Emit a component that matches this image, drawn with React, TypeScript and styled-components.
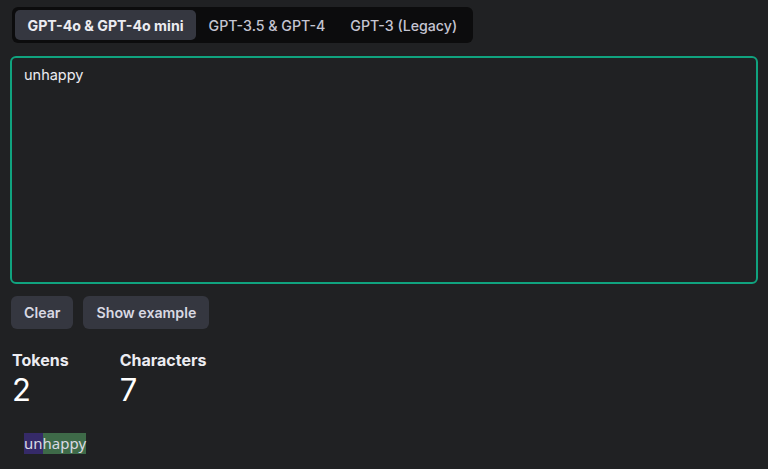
import styled, { createGlobalStyle } from "styled-components";
import { useState } from "react";

const GlobalStyle = createGlobalStyle`
  html, body {
    margin: 0;
    padding: 0;
    background: #202123;
  }
  body {
    font-family: Inter, "Noto Sans", "Liberation Sans", sans-serif;
    color: #ececf1;
  }
`;

const Page = styled.main`
  width: 768px;
  height: 469px;
  box-sizing: border-box;
  padding: 7px 10px 0 10px;
  display: flex;
  flex-direction: column;
  overflow: hidden;
`;

const Tabs = styled.div`
  align-self: flex-start;
  display: flex;
  margin-left: 2px;
  padding: 3px;
  background: #0c0c0d;
  border-radius: 6px;
`;

const Tab = styled.button<{ $active?: boolean }>`
  border: none;
  border-radius: 5px;
  height: 30px;
  padding: 0 12.5px;
  font-family: inherit;
  font-size: 14.2px;
  font-weight: ${(p) => (p.$active ? 700 : 500)};
  color: ${(p) => (p.$active ? "#ececf1" : "#c5c5d2")};
  background: ${(p) => (p.$active ? "#353740" : "transparent")};
  cursor: pointer;
`;

const TextArea = styled.textarea`
  margin-top: 13px;
  height: 228px;
  box-sizing: border-box;
  width: 748px;
  resize: none;
  background: #202123;
  border: 2px solid #10a37f;
  border-radius: 6px;
  padding: 7px 12px;
  color: #ececf1;
  font-family: inherit;
  font-size: 14.5px;
  line-height: 20px;
  outline: none;
`;

const Actions = styled.div`
  display: flex;
  gap: 10px;
  margin-top: 12px;
  margin-left: 1px;
`;

const Btn = styled.button`
  border: none;
  height: 33px;
  padding: 0 13px;
  border-radius: 6px;
  background: #353740;
  color: #d9d9e3;
  font-family: inherit;
  font-size: 14.2px;
  font-weight: 600;
  cursor: pointer;
`;

const Stats = styled.div`
  display: flex;
  gap: 51px;
  margin-top: 22px;
  margin-left: 2px;
`;

const Stat = styled.div`
  display: flex;
  flex-direction: column;
`;

const StatLabel = styled.span`
  font-size: 16px;
  font-weight: 700;
  color: #ececf1;
  line-height: 19px;
`;

const StatValue = styled.span`
  margin-top: 2px;
  font-size: 31px;
  font-weight: 400;
  color: #ffffff;
  line-height: 36px;
`;

const TokenBox = styled.div`
  margin-top: 25px;
  margin-left: 14px;
  display: flex;
  font-family: "Noto Sans", "Liberation Sans", sans-serif;
  font-size: 15px;
  line-height: 21px;
  color: #d9d9e3;
`;

const Token = styled.span<{ $bg: string }>`
  background: ${(p) => p.$bg};
`;

const tokenColors = ["#352a68", "#3e6a48"];

export default function App() {
  const [text, setText] = useState("unhappy");
  const tokens = text ? ["un", "happy"] : [];

  return (
    <>
      <GlobalStyle />
      <Page>
        <Tabs>
          <Tab $active>GPT-4o &amp; GPT-4o mini</Tab>
          <Tab>GPT-3.5 &amp; GPT-4</Tab>
          <Tab>GPT-3 (Legacy)</Tab>
        </Tabs>
        <TextArea value={text} onChange={(e) => setText(e.target.value)} />
        <Actions>
          <Btn onClick={() => setText("")}>Clear</Btn>
          <Btn>Show example</Btn>
        </Actions>
        <Stats>
          <Stat>
            <StatLabel>Tokens</StatLabel>
            <StatValue>{tokens.length}</StatValue>
          </Stat>
          <Stat>
            <StatLabel>Characters</StatLabel>
            <StatValue>{text.length}</StatValue>
          </Stat>
        </Stats>
        <TokenBox>
          {tokens.map((t, i) => (
            <Token key={i} $bg={tokenColors[i % tokenColors.length]}>
              {t}
            </Token>
          ))}
        </TokenBox>
      </Page>
    </>
  );
}
